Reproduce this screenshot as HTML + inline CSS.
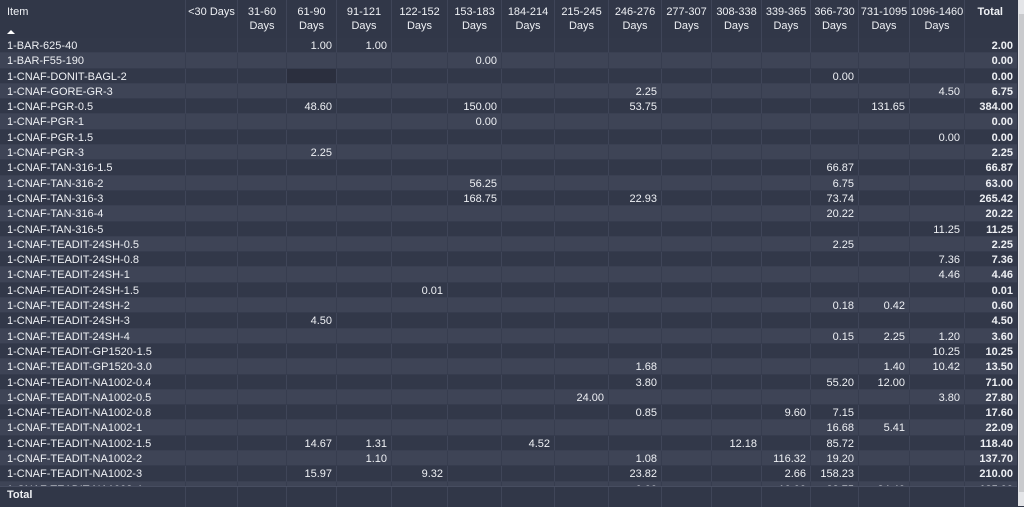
<!DOCTYPE html>
<html><head><meta charset="utf-8"><style>
*{margin:0;padding:0;box-sizing:border-box}
body{width:1024px;height:506px;overflow:hidden;background:#303647;font-family:"Liberation Sans",sans-serif;font-size:11px;color:#eef0f4;position:relative}
.r{display:grid;grid-template-columns:186px 52px 49px 50px 55px 56px 54px 53px 54px 53px 50px 50px 49px 48px 51px 55px 52px;height:15.3px;line-height:17px;width:1017px}
.r>*{border-right:1px solid #3f4558;text-align:right;padding-right:4px;font-style:normal;white-space:nowrap;overflow:hidden;border-bottom:1px solid #3a4052}
.r>*:first-child{text-align:left;padding-left:7px}
.r>*:last-child{font-weight:bold;border-right:none}
.r:nth-child(odd){background:#323849}
.r:nth-child(even){background:#3e4456}
.r:nth-child(even)>*{border-right-color:#373d4f;border-bottom-color:#363c4e}
#hd{position:absolute;left:0;top:0;height:38px;width:1017px;background:#313748;border-bottom:1px solid #474d60}
#hd .r{height:38px;line-height:14px;background:#313748}
#hd .r>*{text-align:center;padding:5px 0 0;white-space:nowrap;overflow:visible;border-bottom:none;border-right-color:#3f4558}
#hd .r>*:first-child{text-align:left;padding-left:7px;position:relative}
#hd .r>*:last-child{text-align:right;padding-right:14px}
#bd{position:absolute;left:0;top:38px;height:448px;width:1017px;overflow:hidden}
#ft{position:absolute;left:0;top:486px;width:1017px;height:20px;background:#313748;border-top:1px solid #474d60}
#ft .r{height:20px;line-height:16px;background:#313748}
#ft .r>*{border-bottom:none}
#ft .r>*:first-child{font-weight:bold}
#sb{position:absolute;left:1018px;top:0;width:6px;height:506px;background:#e4e5e8}
#sb div{position:absolute;left:1px;top:14px;width:5px;height:478px;background:#c9cacd}
.tri{position:absolute;left:7px;top:30px;width:0;height:0;border-left:4px solid transparent;border-right:4px solid transparent;border-bottom:4px solid #fff}
</style></head><body>
<div id="hd"><div class="r"><i>Item<span class="tri"></span></i><i>&lt;30 Days</i><i>31-60<br>Days</i><i>61-90<br>Days</i><i>91-121<br>Days</i><i>122-152<br>Days</i><i>153-183<br>Days</i><i>184-214<br>Days</i><i>215-245<br>Days</i><i>246-276<br>Days</i><i>277-307<br>Days</i><i>308-338<br>Days</i><i>339-365<br>Days</i><i>366-730<br>Days</i><i>731-1095<br>Days</i><i>1096-1460<br>Days</i><i>Total</i></div></div>
<div id="bd">
<div class="r"><i>1-BAR-625-40</i><i></i><i></i><i>1.00</i><i>1.00</i><i></i><i></i><i></i><i></i><i></i><i></i><i></i><i></i><i></i><i></i><i></i><i>2.00</i></div>
<div class="r"><i>1-BAR-F55-190</i><i></i><i></i><i></i><i></i><i></i><i>0.00</i><i></i><i></i><i></i><i></i><i></i><i></i><i></i><i></i><i></i><i>0.00</i></div>
<div class="r"><i>1-CNAF-DONIT-BAGL-2</i><i></i><i></i><i style="background:#2b2f3e"></i><i></i><i></i><i></i><i></i><i></i><i></i><i></i><i></i><i></i><i>0.00</i><i></i><i></i><i>0.00</i></div>
<div class="r"><i>1-CNAF-GORE-GR-3</i><i></i><i></i><i></i><i></i><i></i><i></i><i></i><i></i><i>2.25</i><i></i><i></i><i></i><i></i><i></i><i>4.50</i><i>6.75</i></div>
<div class="r"><i>1-CNAF-PGR-0.5</i><i></i><i></i><i>48.60</i><i></i><i></i><i>150.00</i><i></i><i></i><i>53.75</i><i></i><i></i><i></i><i></i><i>131.65</i><i></i><i>384.00</i></div>
<div class="r"><i>1-CNAF-PGR-1</i><i></i><i></i><i></i><i></i><i></i><i>0.00</i><i></i><i></i><i></i><i></i><i></i><i></i><i></i><i></i><i></i><i>0.00</i></div>
<div class="r"><i>1-CNAF-PGR-1.5</i><i></i><i></i><i></i><i></i><i></i><i></i><i></i><i></i><i></i><i></i><i></i><i></i><i></i><i></i><i>0.00</i><i>0.00</i></div>
<div class="r"><i>1-CNAF-PGR-3</i><i></i><i></i><i>2.25</i><i></i><i></i><i></i><i></i><i></i><i></i><i></i><i></i><i></i><i></i><i></i><i></i><i>2.25</i></div>
<div class="r"><i>1-CNAF-TAN-316-1.5</i><i></i><i></i><i></i><i></i><i></i><i></i><i></i><i></i><i></i><i></i><i></i><i></i><i>66.87</i><i></i><i></i><i>66.87</i></div>
<div class="r"><i>1-CNAF-TAN-316-2</i><i></i><i></i><i></i><i></i><i></i><i>56.25</i><i></i><i></i><i></i><i></i><i></i><i></i><i>6.75</i><i></i><i></i><i>63.00</i></div>
<div class="r"><i>1-CNAF-TAN-316-3</i><i></i><i></i><i></i><i></i><i></i><i>168.75</i><i></i><i></i><i>22.93</i><i></i><i></i><i></i><i>73.74</i><i></i><i></i><i>265.42</i></div>
<div class="r"><i>1-CNAF-TAN-316-4</i><i></i><i></i><i></i><i></i><i></i><i></i><i></i><i></i><i></i><i></i><i></i><i></i><i>20.22</i><i></i><i></i><i>20.22</i></div>
<div class="r"><i>1-CNAF-TAN-316-5</i><i></i><i></i><i></i><i></i><i></i><i></i><i></i><i></i><i></i><i></i><i></i><i></i><i></i><i></i><i>11.25</i><i>11.25</i></div>
<div class="r"><i>1-CNAF-TEADIT-24SH-0.5</i><i></i><i></i><i></i><i></i><i></i><i></i><i></i><i></i><i></i><i></i><i></i><i></i><i>2.25</i><i></i><i></i><i>2.25</i></div>
<div class="r"><i>1-CNAF-TEADIT-24SH-0.8</i><i></i><i></i><i></i><i></i><i></i><i></i><i></i><i></i><i></i><i></i><i></i><i></i><i></i><i></i><i>7.36</i><i>7.36</i></div>
<div class="r"><i>1-CNAF-TEADIT-24SH-1</i><i></i><i></i><i></i><i></i><i></i><i></i><i></i><i></i><i></i><i></i><i></i><i></i><i></i><i></i><i>4.46</i><i>4.46</i></div>
<div class="r"><i>1-CNAF-TEADIT-24SH-1.5</i><i></i><i></i><i></i><i></i><i>0.01</i><i></i><i></i><i></i><i></i><i></i><i></i><i></i><i></i><i></i><i></i><i>0.01</i></div>
<div class="r"><i>1-CNAF-TEADIT-24SH-2</i><i></i><i></i><i></i><i></i><i></i><i></i><i></i><i></i><i></i><i></i><i></i><i></i><i>0.18</i><i>0.42</i><i></i><i>0.60</i></div>
<div class="r"><i>1-CNAF-TEADIT-24SH-3</i><i></i><i></i><i>4.50</i><i></i><i></i><i></i><i></i><i></i><i></i><i></i><i></i><i></i><i></i><i></i><i></i><i>4.50</i></div>
<div class="r"><i>1-CNAF-TEADIT-24SH-4</i><i></i><i></i><i></i><i></i><i></i><i></i><i></i><i></i><i></i><i></i><i></i><i></i><i>0.15</i><i>2.25</i><i>1.20</i><i>3.60</i></div>
<div class="r"><i>1-CNAF-TEADIT-GP1520-1.5</i><i></i><i></i><i></i><i></i><i></i><i></i><i></i><i></i><i></i><i></i><i></i><i></i><i></i><i></i><i>10.25</i><i>10.25</i></div>
<div class="r"><i>1-CNAF-TEADIT-GP1520-3.0</i><i></i><i></i><i></i><i></i><i></i><i></i><i></i><i></i><i>1.68</i><i></i><i></i><i></i><i></i><i>1.40</i><i>10.42</i><i>13.50</i></div>
<div class="r"><i>1-CNAF-TEADIT-NA1002-0.4</i><i></i><i></i><i></i><i></i><i></i><i></i><i></i><i></i><i>3.80</i><i></i><i></i><i></i><i>55.20</i><i>12.00</i><i></i><i>71.00</i></div>
<div class="r"><i>1-CNAF-TEADIT-NA1002-0.5</i><i></i><i></i><i></i><i></i><i></i><i></i><i></i><i>24.00</i><i></i><i></i><i></i><i></i><i></i><i></i><i>3.80</i><i>27.80</i></div>
<div class="r"><i>1-CNAF-TEADIT-NA1002-0.8</i><i></i><i></i><i></i><i></i><i></i><i></i><i></i><i></i><i>0.85</i><i></i><i></i><i>9.60</i><i>7.15</i><i></i><i></i><i>17.60</i></div>
<div class="r"><i>1-CNAF-TEADIT-NA1002-1</i><i></i><i></i><i></i><i></i><i></i><i></i><i></i><i></i><i></i><i></i><i></i><i></i><i>16.68</i><i>5.41</i><i></i><i>22.09</i></div>
<div class="r"><i>1-CNAF-TEADIT-NA1002-1.5</i><i></i><i></i><i>14.67</i><i>1.31</i><i></i><i></i><i>4.52</i><i></i><i></i><i></i><i>12.18</i><i></i><i>85.72</i><i></i><i></i><i>118.40</i></div>
<div class="r"><i>1-CNAF-TEADIT-NA1002-2</i><i></i><i></i><i></i><i>1.10</i><i></i><i></i><i></i><i></i><i>1.08</i><i></i><i></i><i>116.32</i><i>19.20</i><i></i><i></i><i>137.70</i></div>
<div class="r"><i>1-CNAF-TEADIT-NA1002-3</i><i></i><i></i><i>15.97</i><i></i><i>9.32</i><i></i><i></i><i></i><i>23.82</i><i></i><i></i><i>2.66</i><i>158.23</i><i></i><i></i><i>210.00</i></div>
<div class="r"><i>1-CNAF-TEADIT-NA1002-4</i><i></i><i></i><i></i><i></i><i></i><i></i><i></i><i></i><i>0.00</i><i></i><i></i><i>10.00</i><i>33.75</i><i>34.40</i><i></i><i>185.00</i></div>
</div>
<div id="ft"><div class="r"><i>Total</i><i></i><i></i><i></i><i></i><i></i><i></i><i></i><i></i><i></i><i></i><i></i><i></i><i></i><i></i><i></i><i></i></div></div>
<div id="sb"><div></div></div>
</body></html>
